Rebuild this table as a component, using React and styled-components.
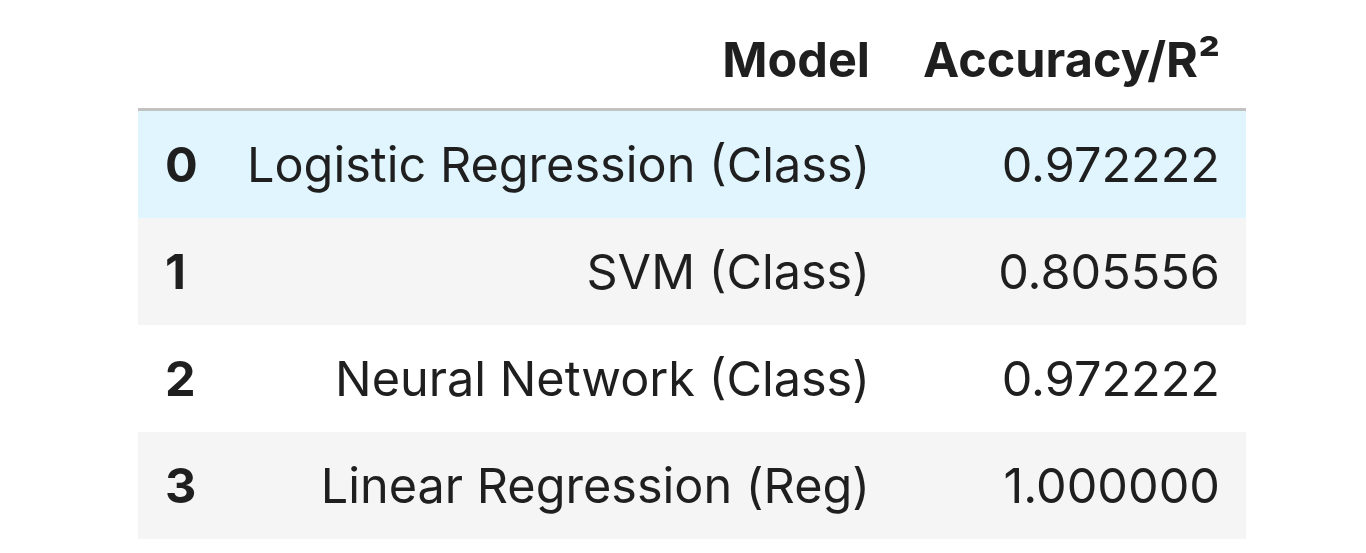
import React from "react";
import styled, { createGlobalStyle } from "styled-components";

const rows = [
  { id: 0, model: "Logistic Regression (Class)", score: "0.972222" },
  { id: 1, model: "SVM (Class)", score: "0.805556" },
  { id: 2, model: "Neural Network (Class)", score: "0.972222" },
  { id: 3, model: "Linear Regression (Reg)", score: "1.000000" },
];

function App() {
  return (
    <Page>
      <GlobalStyle />
      <Frame>
        <colgroup>
          <col style={{ width: 82 }} />
          <col style={{ width: 676 }} />
          <col style={{ width: 350 }} />
        </colgroup>
        <thead>
          <tr>
            <HeadCell />
            <HeadCell>Model</HeadCell>
            <HeadCell>Accuracy/R²</HeadCell>
          </tr>
        </thead>
        <tbody>
          {rows.map((row) => (
            <Row key={row.id} hovered={row.id === 0}>
              <IndexCell>{row.id}</IndexCell>
              <Cell>{row.model}</Cell>
              <Cell>{row.score}</Cell>
            </Row>
          ))}
        </tbody>
      </Frame>
    </Page>
  );
}

const GlobalStyle = createGlobalStyle`
  body {
    margin: 0;
    background: #ffffff;
    font-family: Inter, "Liberation Sans", sans-serif;
    color: #1f1f1f;
  }
`;

const Page = styled.div`
  padding-left: 138px;
`;

const Frame = styled.table`
  border-collapse: separate;
  border-spacing: 0;
  table-layout: fixed;
  width: 1108px;
  font-size: 48.6px;
`;

const HeadCell = styled.th`
  height: 111px;
  padding: 0 26px 19px 27px;
  box-sizing: border-box;
  text-align: right;
  vertical-align: bottom;
  font-weight: 700;
  border-bottom: 3px solid #c2c2c2;
  white-space: nowrap;
`;

const Row = styled.tr`
  height: 107px;
  background: ${(p) => (p.hovered ? "#e1f5fe" : "transparent")};
  &:nth-child(even) {
    background: #f5f5f5;
  }
`;

const Cell = styled.td`
  padding: 0 26px 0 27px;
  text-align: right;
  vertical-align: middle;
  white-space: nowrap;
`;

const IndexCell = styled(Cell)`
  font-weight: 700;
  text-align: left;
`;

export default App;
